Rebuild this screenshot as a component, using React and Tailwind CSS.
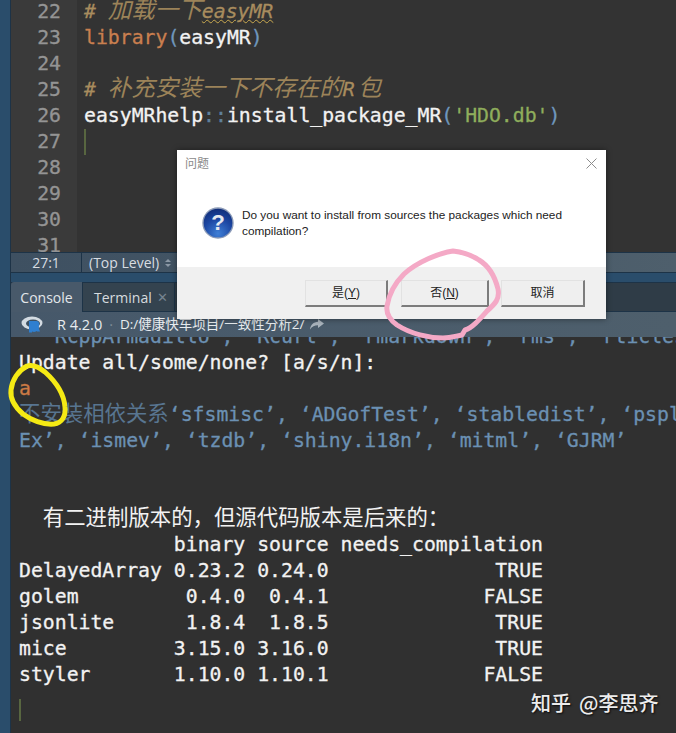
const mono = "font-['DejaVu_Sans_Mono','Noto_Sans_CJK_SC',monospace]";
const solid = '[-webkit-text-stroke:0.3px]';

const codeLines = [
  { n: 22, c: <Comment zh="加载一下" en="easyMR" /> },
  { n: 23, c: <><span className="text-[#c97f4f]">library</span><span className="text-[#6f97bd]">(</span>easyMR<span className="text-[#6f97bd]">)</span></> },
  { n: 24 },
  { n: 25, c: <Comment zh="补充安装一下不存在的" en2="R" zh2="包" /> },
  { n: 26, c: <>easyMRhelp<span className="text-[#5f7f9c]">::</span>install_package_MR<span className="text-[#6f97bd]">(</span><span className="text-[#8fae5c]">'HDO.db'</span><span className="text-[#6f97bd]">)</span></> },
  { n: 27, cursor: true },
  { n: 28 },
  { n: 29 },
  { n: 30 },
  { n: 31 },
];

function Comment({ zh, en, en2, zh2 }) {
  return (
    <span className="italic text-[#a88c5e]">
      # <span className="text-[23.500px] leading-none text-[#9c8359] [-webkit-text-stroke:0]">{zh}</span>
      {en && <span className="underline decoration-wavy decoration-[#c9a94f] decoration-1">{en}</span>}
      {en2}
      {zh2 && <span className="ml-[3px] text-[23.500px] leading-none text-[#9c8359] [-webkit-text-stroke:0]">{zh2}</span>}
    </span>
  );
}

function Zh({ children, className = '' }) {
  return <span className={`text-[21.400px] leading-none [-webkit-text-stroke:0] ${className}`}>{children}</span>;
}

function Line({ children, className = '' }) {
  return <div className={`h-[26px] leading-[26px] whitespace-pre ${className}`}>{children}</div>;
}

function Editor() {
  return (
    <div className={`h-[252px] overflow-hidden bg-[#333333] border-l border-[#1d3347] ${mono} ${solid} text-[19.8px]`}>
      <div className="-mt-px">
        {codeLines.map((l) => (
          <div key={l.n} className="flex h-[26px] leading-[26px]">
            <div className="w-[66px] shrink-0 bg-[#3a3a3a] pr-[16px] text-right text-[#949494]">{l.n}</div>
            <div className="relative pl-[7px] whitespace-pre text-[#f2f2f2]">
              {l.c}
              {l.cursor && <div className="absolute left-[7px] top-0 h-[26px] w-[2px] bg-[#586640]" />}
            </div>
          </div>
        ))}
      </div>
    </div>
  );
}

function StatusBar() {
  return (
    <div className="flex h-[21px] items-center border-y border-l border-[#1d3347] bg-gradient-to-r from-[#3e5061] to-[#4e5f6c] text-[14px] text-[#d8dde2] font-['Open_Sans',sans-serif]">
      <div className="flex h-full w-[71px] items-center justify-center border-r border-[#1d3347]">27:1</div>
      <div className="flex items-center gap-[6px] pl-[7px]">
        (Top Level)
        <span className="flex flex-col gap-[2px]">
          <span className="h-0 w-0 border-x-[3px] border-b-[3px] border-x-transparent border-b-[#8b98a5]" />
          <span className="h-0 w-0 border-x-[3px] border-t-[3px] border-x-transparent border-t-[#8b98a5]" />
        </span>
      </div>
    </div>
  );
}

function RLogo() {
  return (
    <svg width="22" height="18" viewBox="0 0 22 18">
      <ellipse cx="11" cy="7" rx="10.500" ry="6.500" fill="#d3dbe2" />
      <ellipse cx="12" cy="7.500" rx="7" ry="4" fill="#3c4f60" />
      <path d="M8 5h7.500a3 3 0 0 1 1.500 5.500l2 5h-3l-1.800-4H11v5H8z" fill="#2f7fd0" />
      <circle cx="13" cy="11" r="5" fill="#2f7fd0" />
    </svg>
  );
}

function ConsoleHeader() {
  return (
    <>
      <div className="flex h-[30px] items-end border-l border-y border-[#1d3347] bg-[#2f3c47] text-[14px] font-['Open_Sans',sans-serif]">
        <div className="-mt-px flex h-[30px] w-[72px] items-center justify-center self-start rounded-tl-[3px] border-r border-[#1d3347] bg-[#48596a] text-[#e3e7ea]">Console</div>
        <div className="flex h-full w-[92px] items-center gap-[5px] border-r border-[#1d3347] bg-[#34434f] pl-[11px] text-[#d6dbdf]">
          Terminal
          <span className="text-[13px] leading-none text-[#76838f]">✕</span>
        </div>
      </div>
      <div className="flex h-[25px] items-center border-l border-[#1d3347] bg-gradient-to-r from-[#46586a] to-[#4e5f6c] pl-[10px] text-[#e8ecef] font-['Open_Sans','Noto_Sans_CJK_SC',sans-serif] text-[14.500px]">
        <RLogo />
        <span className="ml-[14px]">R 4.2.0</span>
        <span className="mx-[7px] text-[#7f8c98]">·</span>
        <span className="text-[13.500px]">D:/健康快车项目/一致性分析2/</span>
        <svg className="ml-[5px]" width="15" height="11" viewBox="0 0 15 11">
          <path d="M9 0l6 4.5L9 9V6.2C5.5 6.2 3 7.5 1 10.500 1.500 6 4.500 3 9 2.800z" fill="#aab4bd" />
        </svg>
      </div>
    </>
  );
}

const rows = [
  ['DelayedArray', '0.23.2', '0.24.0', 'TRUE'],
  ['golem', ' 0.4.0', ' 0.4.1', 'FALSE'],
  ['jsonlite', ' 1.8.4', ' 1.8.5', 'TRUE'],
  ['mice', '3.15.0', '3.16.0', 'TRUE'],
  ['styler', '1.10.0', '1.10.1', 'FALSE'],
];

function Console() {
  const blue = 'text-[#6b90b3]';
  return (
    <div className={`h-[396px] overflow-hidden border-l border-[#1d3347] bg-[#303030] pl-[8px] ${mono} ${solid} text-[19.8px] text-[#f2f2f2]`}>
      <div className="-mt-[13px]">
        <Line className={blue}>  ‘RcppArmadillo’, ‘Rcurl’, ‘rmarkdown’, ‘rms’, ‘rticles’</Line>
        <Line>Update all/some/none? [a/s/n]:</Line>
        <Line className="text-[#cc7a45]">a</Line>
        <Line className={blue}><Zh className="text-[#587590]">不安装相依关系</Zh>‘sfsmisc’, ‘ADGofTest’, ‘stabledist’, ‘pspline’</Line>
        <Line className={blue}>Ex’, ‘ismev’, ‘tzdb’, ‘shiny.i18n’, ‘mitml’, ‘GJRM’</Line>
        <Line />
        <Line />
        <Line>  <Zh>{'有二进制版本的\uFF0C但源代码版本是后来的\uFF1A'}</Zh></Line>
        <Line>{'             binary source needs_compilation'}</Line>
        {rows.map((r) => (
          <Line key={r[0]}>{`${r[0].padEnd(12)} ${r[1]} ${r[2]} ${r[3].padStart(17)}`}</Line>
        ))}
        <div className="h-[26px] pt-[11px]">
          <div className="h-[22px] w-[2px] bg-[#586640]" />
        </div>
      </div>
    </div>
  );
}

function HelpIcon() {
  return (
    <svg width="32" height="32" viewBox="0 0 33 33" className="shrink-0">
      <defs>
        <radialGradient id="helpBlue" cx="50%" cy="85%" r="80%">
          <stop offset="0%" stopColor="#3f7fd6" />
          <stop offset="60%" stopColor="#1c47a3" />
          <stop offset="100%" stopColor="#12307c" />
        </radialGradient>
      </defs>
      <circle cx="16.500" cy="16.500" r="15.500" fill="url(#helpBlue)" stroke="#8d9cb8" strokeWidth="1.400" />
      <text x="16.500" y="24" textAnchor="middle" fontSize="23" fontWeight="700" fill="#e6e9ef" fontFamily="Liberation Sans, sans-serif">?</text>
    </svg>
  );
}

function DialogButton({ children, className = '' }) {
  return (
    <div className={`flex h-[27px] items-center justify-center border-t border-l border-t-[#e2e2e2] border-l-[#e2e2e2] border-r-2 border-b-2 border-r-[#7c7c7c] border-b-[#7c7c7c] bg-[#efefef] text-[12px] text-[#222] ${className}`}>
      {children}
    </div>
  );
}

function Dialog() {
  return (
    <div className="absolute left-[177px] top-[150px] flex h-[169px] w-[429px] flex-col bg-white font-['Liberation_Sans','Noto_Sans_CJK_SC',sans-serif] shadow-[0_0_6px_rgba(0,0,0,0.45)]">
      <div className="flex h-[27px] items-center justify-between pl-[8px] pr-[9px] text-[12px] text-[#8a8a8a]">
        问题
        <svg width="11" height="11" viewBox="0 0 11 11" stroke="#8c8c8c" strokeWidth="1"><path d="M.5.5l10 10M10.500.5l-10 10" /></svg>
      </div>
      <div className="flex flex-1 items-start gap-[8px] pl-[25px] pt-[30px]">
        <HelpIcon />
        <p className="w-[340px] text-[11.800px] leading-[16px] text-[#222]">
          Do you want to install from sources the packages which need compilation?
        </p>
      </div>
      <div className="flex h-[52px] items-center bg-[#f0f0f0] pl-[128px]">
        <DialogButton className="w-[83px]">是(<u>Y</u>)</DialogButton>
        <DialogButton className="ml-[13px] w-[88px]">否(<u>N</u>)</DialogButton>
        <DialogButton className="ml-[12px] w-[84px]">取消</DialogButton>
      </div>
    </div>
  );
}

function Scribbles() {
  return (
    <svg className="absolute inset-0 pointer-events-none" width="676" height="733" viewBox="0 0 676 733" fill="none" strokeLinecap="round" strokeLinejoin="round">
      <path d="M453 251c-14 2-36 11-49 23-9 9-15 20-17 32-1 7 3 14 10 19 14 9 32 13 46 13 8 0 13-2 19-3l3-5c7-2 14-10 22-19 8-7 13-12 11-22-3-12-9-23-19-29-9-6-18-8-26-9z" stroke="#f4a9c6" strokeWidth="5" />
      <path d="M27 366c-9 5-15 14-16 24-1 9 5 18 12 24 8 6 20 11 31 10 8-1 12-8 11-17-1-13-10-26-20-35-6-5-12-8-18-6z" stroke="#f5ea14" strokeWidth="5" />
    </svg>
  );
}

export default function App() {
  return (
    <div className="relative flex h-[733px] w-[676px] overflow-hidden bg-[#2a4d6b]">
      <div className="w-[10px] shrink-0" />
      <div className="min-w-0 flex-1">
        <Editor />
        <StatusBar />
        <div className="h-[9px] border-l border-[#1d3347]" />
        <ConsoleHeader />
        <Console />
      </div>
      <Dialog />
      <Scribbles />
      <div className="absolute left-[531px] top-[690px] flex gap-[8px] text-[20px] font-medium leading-[26px] text-[#ececec] font-['Noto_Sans_CJK_SC',sans-serif] [text-shadow:1px_1px_2px_rgba(0,0,0,0.8)]">
        <span>知乎</span>
        <span>@李思齐</span>
      </div>
    </div>
  );
}
